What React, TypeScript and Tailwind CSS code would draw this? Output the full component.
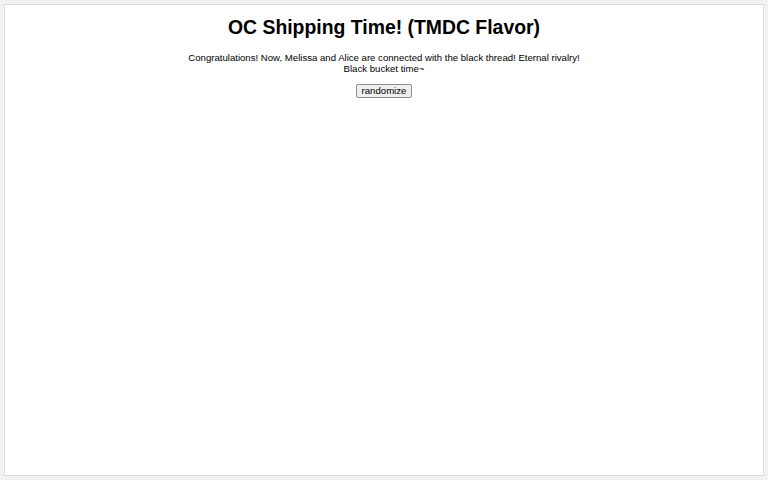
export default function App() {
  return (
    <div className="h-[480px] w-[768px] bg-[#f2f2f2] p-[4px] font-['Liberation_Sans',Arial,sans-serif] text-black">
      <div className="flex h-full flex-col items-center border border-[#dcdcdc] bg-white pt-[11px]">
        <h1 className="text-[19.4px] font-bold leading-[22px]">OC Shipping Time! (TMDC Flavor)</h1>
        <p className="mt-[14px] text-center text-[9.6px] leading-[11px]">
          Congratulations! Now, Melissa and Alice are connected with the black thread! Eternal rivalry!
          <br />
          Black bucket time~
        </p>
        <button className="mt-[10px] h-[14px] rounded-[2px] border border-[#8f8f8f] bg-[#efefef] px-[5px] text-[9.6px] leading-[10px]">
          randomize
        </button>
      </div>
    </div>
  );
}
